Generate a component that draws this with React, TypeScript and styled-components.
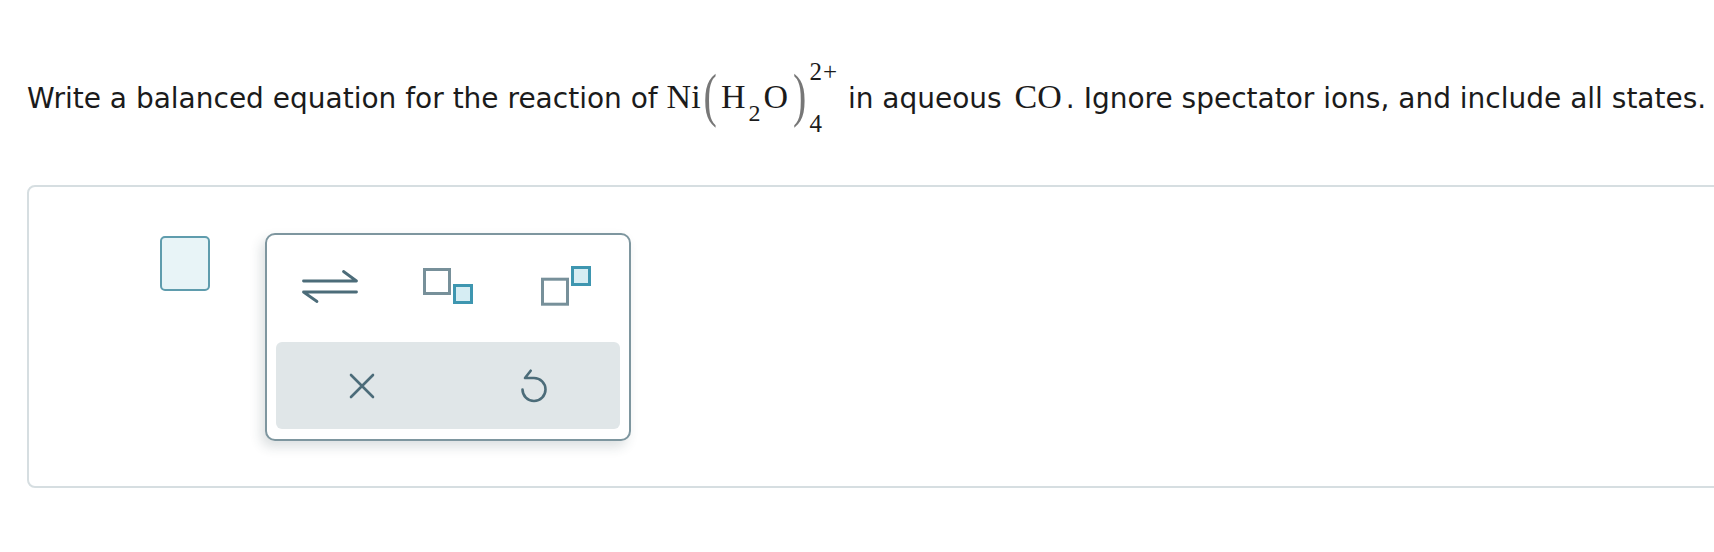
import React from "react";
import styled, { createGlobalStyle } from "styled-components";

const GlobalStyle = createGlobalStyle`
  html, body {
    margin: 0;
    padding: 0;
    background: #fff;
    overflow: hidden;
  }

  body {
    font-family: "DejaVu Sans", Verdana, sans-serif;
    color: #1b1b1b;
  }
`;

const Page = styled.div`
  width: 1714px;
  height: 552px;
  box-sizing: border-box;
  padding-left: 27px;
`;

const Question = styled.p`
  margin: 0;
  height: 185px;
  box-sizing: border-box;
  padding-top: 59px;
  font-size: 28px;
  line-height: 40px;
  white-space: nowrap;
`;

const MathText = styled.span<{ $gap?: number }>`
  font-family: "Liberation Serif", "Times New Roman", serif;
  font-size: 34px;
  margin: 0 ${(p) => p.$gap ?? 0}px;
`;

const Fence = styled.span<{ $before: number; $after: number }>`
  display: inline-block;
  font-family: "Liberation Serif", "Times New Roman", serif;
  font-size: 40px;
  line-height: 1;
  color: #777;
  transform: scaleY(1.5);
  margin: 0 ${(p) => p.$after}px 0 ${(p) => p.$before}px;
`;

const Lowered = styled.span`
  font-size: 24px;
  vertical-align: -13px;
  margin: 0 3px 0 3px;
`;

const Scripts = styled.span`
  display: inline-flex;
  flex-direction: column;
  gap: 27px;
  margin-left: 3px;
  margin-right: 1px;
  font-family: "Liberation Serif", "Times New Roman", serif;
  font-size: 25px;
  line-height: 25px;
  letter-spacing: 1px;
  vertical-align: 28px;
`;

const Card = styled.div`
  width: 1720px;
  height: 303px;
  box-sizing: border-box;
  border: 2px solid #d6dee1;
  border-radius: 8px;
  display: flex;
  align-items: flex-start;
  gap: 55px;
  padding: 46px 0 0 131px;
`;

const AnswerSlot = styled.div`
  margin-top: 3px;
  width: 50px;
  height: 55px;
  box-sizing: border-box;
  border: 2px solid #5f9cad;
  border-radius: 5px;
  background: #e8f4f7;
`;

const Palette = styled.div`
  width: 366px;
  height: 208px;
  box-sizing: border-box;
  border: 2px solid #7e969f;
  border-radius: 10px;
  background: #fff;
  box-shadow: -4px 6px 12px rgba(40, 60, 70, 0.16);
  padding: 9px;
  display: flex;
  flex-direction: column;
  gap: 14px;
`;

const ToolRow = styled.div`
  height: 84px;
  margin: 0 -5px;
  display: grid;
  grid-template-columns: repeat(3, 118px);
  justify-content: center;
  align-items: center;
  justify-items: center;
`;

const ActionBar = styled.div`
  height: 87px;
  border-radius: 6px;
  background: #e0e6e8;
  display: grid;
  grid-template-columns: 1fr 1fr;
  align-items: center;
  justify-items: center;
`;

const IconButton = styled.button`
  border: 0;
  padding: 0;
  background: none;
  display: flex;
  cursor: pointer;
`;

const ink = "#4c6c79";

const EquilibriumIcon = () => (
  <svg width="58" height="36" viewBox="0 0 58 36" fill="none">
    <path
      d="M2.5 13 H55.5 L42.5 3.5 M55.5 24 H2.5 L16 33.5"
      stroke={ink}
      strokeWidth="2.8"
      strokeLinecap="round"
      strokeLinejoin="round"
    />
  </svg>
);

const SubscriptIcon = () => (
  <svg width="50" height="36" viewBox="0 0 50 36" fill="none">
    <rect x="1.5" y="1.5" width="25" height="24" stroke="#77909a" strokeWidth="3" />
    <rect x="31.5" y="17.5" width="17" height="17" fill="#d6edf3" stroke="#3e96b0" strokeWidth="3" />
  </svg>
);

const SuperscriptIcon = () => (
  <svg width="50" height="40" viewBox="0 0 50 40" fill="none">
    <rect x="1.5" y="13.2" width="25" height="25" stroke="#77909a" strokeWidth="3" />
    <rect x="31.5" y="1.5" width="17" height="17" fill="#d6edf3" stroke="#3e96b0" strokeWidth="3" />
  </svg>
);

const ClearIcon = () => (
  <svg width="26" height="26" viewBox="0 0 26 26" fill="none">
    <path d="M2 2 L24 24 M24 2 L2 24" stroke={ink} strokeWidth="2.6" strokeLinecap="round" />
  </svg>
);

const UndoIcon = () => (
  <svg width="28" height="36" viewBox="0 0 28 36" fill="none">
    <path
      d="M10.7 2.7 L5 10 L14 10 A11.5 11.5 0 1 1 2.5 21.5"
      stroke={ink}
      strokeWidth="2.6"
      strokeLinecap="round"
      strokeLinejoin="round"
    />
  </svg>
);

export default function App() {
  return (
    <Page>
      <GlobalStyle />
      <Question>
        Write a balanced equation for the reaction of{" "}
        <MathText>
          Ni
          <Fence $before={3} $after={4}>(</Fence>
          H<Lowered>2</Lowered>O
          <Fence $before={5} $after={0}>)</Fence>
        </MathText>
        <Scripts>
          <span>2+</span>
          <span>4</span>
        </Scripts>{" "}
        in aqueous <MathText $gap={4}>CO</MathText>. Ignore spectator ions, and include all states.
      </Question>
      <Card>
        <AnswerSlot />
        <Palette>
          <ToolRow>
            <IconButton aria-label="equilibrium arrow">
              <EquilibriumIcon />
            </IconButton>
            <IconButton aria-label="subscript">
              <SubscriptIcon />
            </IconButton>
            <IconButton aria-label="superscript">
              <SuperscriptIcon />
            </IconButton>
          </ToolRow>
          <ActionBar>
            <IconButton aria-label="clear">
              <ClearIcon />
            </IconButton>
            <IconButton aria-label="undo">
              <UndoIcon />
            </IconButton>
          </ActionBar>
        </Palette>
      </Card>
    </Page>
  );
}
